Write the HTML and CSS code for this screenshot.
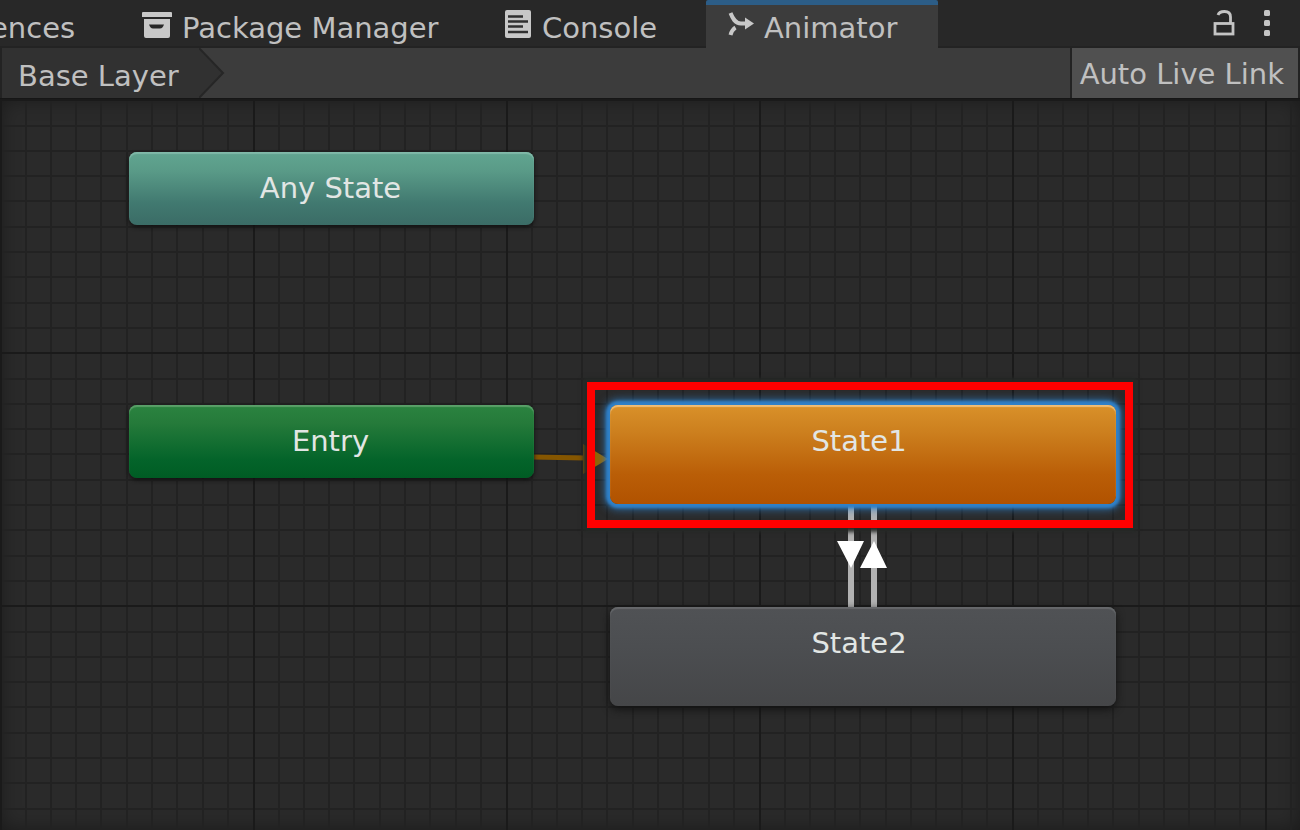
FILE: index.html
```html
<!DOCTYPE html>
<html lang="en">
<head>
<meta charset="utf-8">
<title>Animator</title>
<link rel="stylesheet" href="styles.css">
</head>
<body>
<div class="window">
  <header class="tabs">
    <button class="tab tab-cut" type="button">ences</button>
    <button class="tab tab-package" type="button">
      <svg class="icon" width="30" height="26" viewBox="0 0 30 26"><path fill="#c8c8c8" fill-rule="evenodd" d="M1 0h28a1 1 0 0 1 1 1v4H0V1a1 1 0 0 1 1-1zM2 7h26V24a2 2 0 0 1-2 2H4a2 2 0 0 1-2-2zM7 12.500c1 2.500 2 4 4 4h7c2 0 3-1.500 4-4z"/></svg>
      <span>Package Manager</span>
    </button>
    <button class="tab tab-console" type="button">
      <svg class="icon icon-console" width="26" height="28" viewBox="0 0 26 28"><rect width="26" height="28" rx="2" fill="#c8c8c8"/><path stroke="#303030" stroke-width="2.400" d="M3 6.500h15M3 11.500h20M3 16.500h15M3 22h20"/></svg>
      <span>Console</span>
    </button>
    <button class="tab tab-active" type="button">
      <svg class="icon" width="26" height="24" viewBox="0 0 26 24"><path d="M2.500 1C4.500 6 7 11.500 13 11.500h5M2.500 23c1-3.500 2.500-6 5-7.500" fill="none" stroke="#c8c8c8" stroke-width="4"/><path d="M17 5.500l9 6-9 6z" fill="#c8c8c8"/></svg>
      <span>Animator</span>
    </button>
    <div class="window-tools">
      <button class="tool" type="button" aria-label="Lock">
        <svg width="22" height="26" viewBox="0 0 22 26"><rect x="2" y="13.500" width="18" height="10.500" fill="none" stroke="#c4c4c4" stroke-width="2.800"/><path d="M5 5c1-3 3.500-3.500 6.500-3.500 4 0 6 2 6 5.500v6" fill="none" stroke="#c4c4c4" stroke-width="2.800"/></svg>
      </button>
      <button class="tool" type="button" aria-label="More options">
        <svg width="6" height="26" viewBox="0 0 6 26" fill="#c4c4c4"><rect y="0" width="6" height="6" rx="1.500"/><rect y="10" width="6" height="6" rx="1.500"/><rect y="20" width="6" height="6" rx="1.500"/></svg>
      </button>
    </div>
  </header>
  <nav class="toolbar">
    <button class="crumb" type="button">Base Layer</button>
    <svg class="crumb-end" width="26" height="50" viewBox="0 0 26 50"><path d="M0 0l24 25L0 50z" fill="#313131"/><path d="M0 0l24 25L0 50" fill="none" stroke="#262626" stroke-width="2"/></svg>
    <button class="live-link" type="button">Auto Live Link</button>
  </nav>
  <main class="graph">
    <svg class="grid" width="100%" height="100%">
      <defs>
        <pattern id="cells" x="-1" y="0" width="253" height="253" patternUnits="userSpaceOnUse">
          <path fill="none" stroke="#222" stroke-width="2" d="M27 0v253M52 0v253M77 0v253M102 0v253M128 0v253M153 0v253M178 0v253M204 0v253M229 0v253M0 27h253M0 52h253M0 77h253M0 102h253M0 128h253M0 153h253M0 178h253M0 204h253M0 229h253"/>
          <path fill="none" stroke="#1a1a1a" stroke-width="2" d="M2 0v253M0 1h253"/>
        </pattern>
      </defs>
      <rect width="100%" height="100%" fill="url(#cells)"/>
      <path d="M533 358l52 1" stroke="#855600" stroke-width="5"/>
      <path d="M583 345l25 15-25 15z" fill="#946400"/>
      <path d="M851 400v110M874 400v110" stroke="#b2b2b2" stroke-width="6"/>
    </svg>
    <button class="node any-state" type="button">Any State</button>
    <button class="node entry" type="button">Entry</button>
    <button class="node state state1" type="button">State1</button>
    <button class="node state state2" type="button">State2</button>
    <div class="highlight"></div>
    <svg class="arrows" width="50" height="27" viewBox="0 0 50 27" fill="#fff"><path d="M0 0h27L14 27zM23 27h27L37 0z"/></svg>
  </main>
</div>
</body>
</html>
```
FILE: styles.css
```css
* {
  box-sizing: border-box;
}

body {
  margin: 0;
  background: #2a2a2a;
}

button {
  margin: 0;
  padding: 0;
  border: 0;
  background: none;
  color: #c0c0c0;
  font: 29px/40px "DejaVu Sans", Verdana, sans-serif;
  white-space: nowrap;
}

.window {
  display: flex;
  flex-direction: column;
  min-height: 100vh;
  overflow: hidden;
}

.tabs {
  display: flex;
  height: 48px;
  background: #282828;
  box-shadow: inset 0 -2px #232323;
}

.tab {
  display: flex;
  flex: none;
  align-items: flex-start;
  gap: 10px;
  padding: 8px 0 0 22px;
}

.tab-cut {
  width: 130px;
  margin-left: -10px;
  padding-left: 0;
}

.tab-package {
  width: 363px;
}

.tab-console {
  width: 223px;
  gap: 11px;
}

.tab-active {
  width: 232px;
  padding-top: 3px;
  border-top: 5px solid #2c5d87;
  border-radius: 2px 2px 0 0;
  background: #3c3c3c;
}

.icon {
  flex: none;
  margin-top: 4px;
}

.icon-console {
  margin-top: 2px;
}

.window-tools {
  display: flex;
  align-items: flex-start;
  gap: 29px;
  margin-left: auto;
  padding: 10px 30px 0 0;
}

.tool {
  line-height: 0;
}

.toolbar {
  display: flex;
  height: 51px;
  padding: 0 2px;
  border-bottom: 1px solid #161616;
  background: #3c3c3c;
  box-shadow: inset 2px 0 #232323, inset -2px 0 #232323;
}

.crumb {
  padding: 6px 20px 0 16px;
  background: #313131;
}

.crumb-end {
  flex: none;
}

.live-link {
  margin-left: auto;
  padding: 2px 14px 0 8px;
  border-left: 2px solid #232323;
  background: #505050;
}

.graph {
  position: relative;
  flex: 1;
  background: #2a2a2a;
  box-shadow: inset 0 0 20px rgba(0, 0, 0, 0.4);
}

.grid {
  position: absolute;
  inset: 0;
}

.node {
  position: absolute;
  width: 405px;
  height: 73px;
  padding: 0 2px 1px 0;
  border-radius: 8px;
  color: #e2e6e4;
  line-height: 72px;
}

.any-state {
  left: 129px;
  top: 53px;
  background: linear-gradient(#61a590, #5a9b88 25%, #417970 70%, #3b6c66);
  box-shadow: inset 0 2px 1px #80b9a8, 0 2px 4px #111;
}

.entry {
  left: 129px;
  top: 306px;
  background: linear-gradient(#2b8340, #257a3a 25%, #04642a 75%, #005c24);
  box-shadow: inset 0 2px 1px #5aa069, 0 2px 4px #111;
}

.state {
  left: 610px;
  width: 506px;
  height: 99px;
  padding: 0 8px 27px 0;
}

.state1 {
  top: 306px;
  background: linear-gradient(#d9912a, #cc7f1e 28%, #ba5e07 70%, #b15200);
  box-shadow: inset 0 2px 1px #eebd77, 0 0 3px 4px #2f80c8, 0 0 10px 5px rgba(47, 128, 200, 0.8);
}

.state2 {
  top: 508px;
  background: linear-gradient(#505255, #4c4e51 40%, #454648);
  box-shadow: inset 0 2px 1px #66686b, 0 3px 8px #111;
}

.highlight {
  position: absolute;
  left: 587px;
  top: 283px;
  width: 546px;
  height: 146px;
  border: 8px solid #f00;
  box-shadow: 0 0 4px 4px #262927;
  pointer-events: none;
}

.arrows {
  position: absolute;
  left: 837px;
  top: 442px;
}
```
